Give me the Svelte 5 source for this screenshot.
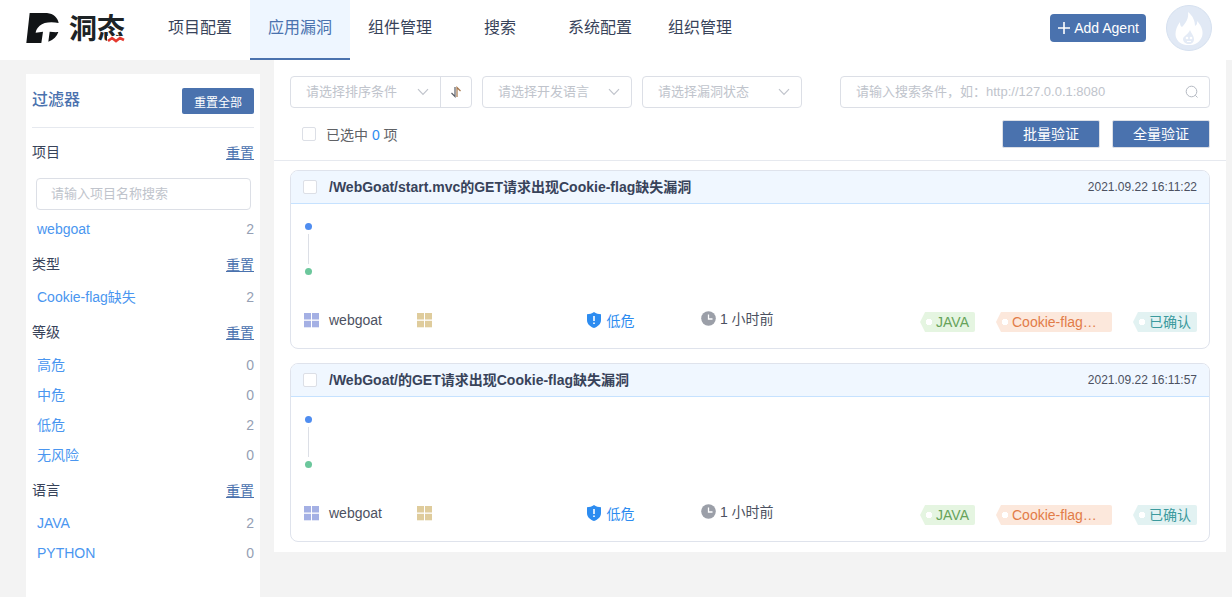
<script lang="ts">
	const nav = ['项目配置', '应用漏洞', '组件管理', '搜索', '系统配置', '组织管理'];
	let activeNav = $state('应用漏洞');

	const filters = [
		{ title: '项目', search: true, items: [{ name: 'webgoat', count: 2 }] },
		{ title: '类型', search: false, items: [{ name: 'Cookie-flag缺失', count: 2 }] },
		{
			title: '等级',
			search: false,
			items: [
				{ name: '高危', count: 0 },
				{ name: '中危', count: 0 },
				{ name: '低危', count: 2 },
				{ name: '无风险', count: 0 }
			]
		},
		{
			title: '语言',
			search: false,
			items: [
				{ name: 'JAVA', count: 2 },
				{ name: 'PYTHON', count: 0 }
			]
		}
	];

	let vulns = $state([
		{
			id: 1,
			title: '/WebGoat/start.mvc的GET请求出现Cookie-flag缺失漏洞',
			time: '2021.09.22 16:11:22',
			checked: false
		},
		{
			id: 2,
			title: '/WebGoat/的GET请求出现Cookie-flag缺失漏洞',
			time: '2021.09.22 16:11:57',
			checked: false
		}
	]);

	const selected = $derived(vulns.filter((v) => v.checked).length);

	function toggleAll(e: Event) {
		const on = (e.target as HTMLInputElement).checked;
		vulns.forEach((v) => (v.checked = on));
	}
</script>

{#snippet dropdown(label: string, cls: string)}
	<div class="select {cls}">
		<select aria-label={label}>
			<option>{label}</option>
		</select>
		<svg class="chevron" width="12" height="8" viewBox="0 0 12 8">
			<path d="M1 1.2 6 6.4 11 1.2" fill="none" stroke="#c0c4cc" stroke-width="1.2" />
		</svg>
	</div>
{/snippet}

{#snippet grid(color: string)}
	<svg width="15" height="15" viewBox="0 0 15 15" fill={color}>
		<rect width="7" height="6.5" />
		<rect x="8" width="7" height="6.5" />
		<rect y="7.8" width="7" height="6.5" />
		<rect x="8" y="7.8" width="7" height="6.5" />
	</svg>
{/snippet}

<header class="header">
	<a class="logo" href="#home">
		<svg width="33" height="30" viewBox="0 0 97 90" fill="#111416">
			<path d="M10 0H62C82 2 94 14 97 30C76 25 52 27 40 38C31 46 29 52 28 59L50 56L45 90H0Z" />
			<path d="M70 56C80 57 88 58 96 57C92 70 82 80 66 86Z" />
		</svg>
		<span class="logo-text">
			洞态
			<svg class="wave" width="18" height="7" viewBox="0 0 18 7">
				<path d="M1 5 5 2 9 5 13 2 17 4" fill="none" stroke="#e5392f" stroke-width="2.6" />
			</svg>
		</span>
	</a>
	<nav>
		{#each nav as item}
			<a
				href="#{item}"
				class:active={activeNav === item}
				onclick={() => (activeNav = item)}>{item}</a
			>
		{/each}
	</nav>
	<button class="add-agent">
		<svg width="14" height="14" viewBox="0 0 14 14">
			<path d="M7 1V13M1 7H13" stroke="#fff" stroke-width="1.6" />
		</svg>
		Add Agent
	</button>
	<svg class="avatar" width="46" height="46" viewBox="0 0 46 46">
		<circle cx="23" cy="23" r="22.5" fill="#e1e9f5" stroke="#d5e0ef" />
		<path
			d="M22 7C27 11 29 16 29 21C31 20 31.5 18 31 16C35 20 37 25 36.5 29C36 35 31 39 26 40H20C14 39 9.500 35 9.500 29C9.500 25 11 21 14 17C14 20 14.500 21 16 22C20 18 23 13 22 7Z"
			fill="#fff"
		/>
		<path
			d="M24 25C25 28 28 31 28 34C28 37 26 39 23 39C20 39 17 37 17 34C17 31 22 30 24 25Z"
			fill="#e4ebf6"
		/>
		<g fill="#fff">
			<circle cx="21" cy="33" r="1.3" />
			<circle cx="25" cy="33" r="1.3" />
			<rect x="21" y="36" width="4" height="1" />
		</g>
	</svg>
</header>

<div class="layout">
	<aside class="sidebar">
		<div class="sidebar-head">
			<h2>过滤器</h2>
			<button class="reset-all">重置全部</button>
		</div>
		{#each filters as group}
			<section>
				<div class="group-head">
					<h3>{group.title}</h3>
					<button class="reset">重置</button>
				</div>
				{#if group.search}
					<input
						class="project-search"
						type="text"
						placeholder="请输入项目名称搜索"
						aria-label="请输入项目名称搜索"
					/>
				{/if}
				<ul>
					{#each group.items as item}
						<li>
							<a href="#{item.name}">{item.name}</a>
							<span>{item.count}</span>
						</li>
					{/each}
				</ul>
			</section>
		{/each}
	</aside>

	<main class="content">
		<div class="toolbar">
			<div class="sort">
				{@render dropdown('请选择排序条件', 'joined')}
				<button class="sort-btn" aria-label="排序">
					<svg width="12" height="12" viewBox="0 0 12 12" fill="none" stroke-width="1.2">
						<path d="M5 1V10.5L1.5 7" stroke="#5b5f68" />
						<path d="M7 11V1.5L10.5 5" stroke="#a5764b" />
					</svg>
				</button>
			</div>
			{@render dropdown('请选择开发语言', '')}
			{@render dropdown('请选择漏洞状态', 'wide')}
			<div class="search">
				<input
					type="text"
					placeholder="请输入搜索条件，如：http://127.0.0.1:8080"
					aria-label="搜索条件"
				/>
				<svg width="14" height="14" viewBox="0 0 14 14" fill="none" stroke="#b4b9c2">
					<circle cx="6.5" cy="6.5" r="5.3" />
					<path d="M10.3 10.3 12.5 12.5" />
				</svg>
			</div>
		</div>

		<div class="batch">
			<label>
				<input type="checkbox" checked={selected === vulns.length} onchange={toggleAll} />
				<span>已选中 <b>{selected}</b> 项</span>
			</label>
			<div class="batch-actions">
				<button>批量验证</button>
				<button>全量验证</button>
			</div>
		</div>

		<div class="cards">
			{#each vulns as vuln (vuln.id)}
				<article class="card">
					<div class="card-head">
						<label>
							<input type="checkbox" bind:checked={vuln.checked} />
							<span>{vuln.title}</span>
						</label>
						<time>{vuln.time}</time>
					</div>
					<div class="trace">
						<i class="dot blue"></i>
						<i class="line"></i>
						<i class="dot green"></i>
					</div>
					<div class="card-foot">
						<div class="cell project">
							{@render grid('#a4b0e4')}
							<span>webgoat</span>
						</div>
						<div class="cell">
							{@render grid('#dfcc9c')}
						</div>
						<div class="cell level">
							<svg width="14" height="16" viewBox="0 0 14 16">
								<path
									d="M7 0C9 1.5 11.5 2.2 14 2.2V8C14 12 11 14.5 7 16C3 14.5 0 12 0 8V2.2C2.5 2.2 5 1.5 7 0Z"
									fill="#2d8cf0"
								/>
								<path d="M7 4V9M7 10.5V12" stroke="#fff" stroke-width="1.6" />
							</svg>
							<span>低危</span>
						</div>
						<div class="cell ago">
							<svg width="15" height="15" viewBox="0 0 15 15">
								<circle cx="7.5" cy="7.5" r="7.3" fill="#9b9fa8" />
								<path d="M7.5 3.5V8H11.5" fill="none" stroke="#fff" stroke-width="1.3" />
							</svg>
							<span>1 小时前</span>
						</div>
						<div class="tags">
							<span class="tag lang">JAVA</span>
							<span class="tag type">Cookie-flag…</span>
							<span class="tag status">已确认</span>
						</div>
					</div>
				</article>
			{/each}
		</div>
	</main>
</div>

<style>
	:global(body) {
		background: #f3f3f3;
		color: #38435a;
		font-family: 'Liberation Sans', 'Noto Sans CJK SC', sans-serif;
		font-size: 14px;
	}

	:global(*) {
		box-sizing: border-box;
	}

	button,
	input,
	select {
		font-family: inherit;
		font-size: 14px;
		margin: 0;
	}

	button {
		cursor: pointer;
		padding: 0;
		border: none;
	}

	a {
		text-decoration: none;
	}

	svg {
		display: block;
		flex-shrink: 0;
	}

	.header {
		display: flex;
		align-items: center;
		height: 60px;
		padding: 0 20px 0 26px;
		background: #fff;
	}

	.logo {
		display: flex;
		align-items: center;
		gap: 10px;
		width: 124px;
		height: 56px;
		align-self: flex-start;
		color: #1d2326;
	}

	.logo-text {
		position: relative;
		padding-top: 4px;
		font-size: 28px;
		font-weight: 700;
		line-height: 28px;
	}

	.wave {
		position: absolute;
		right: 0;
		bottom: 1px;
		background: #fff;
	}

	nav {
		display: flex;
		align-self: stretch;
		margin-right: auto;
	}

	nav a {
		width: 100px;
		height: 60px;
		line-height: 56px;
		font-size: 16px;
		text-align: center;
		color: #38435a;
		border-bottom: 2px solid transparent;
	}

	nav a.active {
		color: #4a72ae;
		background: #eef6ff;
		border-color: #4a72ae;
	}

	.add-agent {
		display: flex;
		align-items: center;
		justify-content: center;
		gap: 3px;
		width: 96px;
		height: 28px;
		margin: 0 20px 4px 0;
		color: #fff;
		background: #4a72ae;
		border-radius: 4px;
		white-space: nowrap;
	}

	.avatar {
		margin-bottom: 4px;
	}

	.layout {
		display: flex;
		align-items: flex-start;
		gap: 14px;
		padding: 0 6px 0 26px;
	}

	.sidebar {
		width: 234px;
		flex-shrink: 0;
		min-height: calc(100vh - 74px);
		margin-top: 14px;
		padding: 14px 6px;
		background: #fff;
	}

	.sidebar-head {
		display: flex;
		justify-content: space-between;
		padding-bottom: 13px;
		margin-bottom: 4px;
		border-bottom: 1px solid #e6e9ef;
	}

	h2 {
		margin: 0;
		font-size: 16px;
		font-weight: 500;
		line-height: 24px;
		color: #4a72ae;
	}

	.reset-all {
		width: 72px;
		height: 26px;
		font-size: 12px;
		color: #fff;
		background: #4a72ae;
		border-radius: 2px;
	}

	.group-head {
		display: flex;
		align-items: center;
		justify-content: space-between;
		height: 38px;
	}

	h3 {
		margin: 0;
		font-size: 14px;
		font-weight: 400;
	}

	.reset {
		padding-top: 2px;
		color: #4a72ae;
		background: none;
		text-decoration: underline;
	}

	.project-search {
		display: block;
		width: calc(100% - 7px);
		height: 32px;
		margin: 8px 3px 4px 4px;
		padding: 0 14px 2px;
		font-size: 13px;
		border: 1px solid #dcdfe6;
		border-radius: 4px;
	}

	input::placeholder {
		color: #c0c4cc;
	}

	ul {
		margin: 0;
		padding: 0 0 0 5px;
		list-style: none;
	}

	li {
		display: flex;
		justify-content: space-between;
		line-height: 30px;
		color: #959fb4;
	}

	li a {
		color: #4a96f0;
	}

	.content {
		flex: 1;
		min-width: 0;
		background: #fff;
	}

	.toolbar {
		display: flex;
		gap: 10px;
		padding: 16px 16px 0;
	}

	.select {
		display: grid;
		align-items: center;
		width: 150px;
		height: 32px;
		border: 1px solid #dcdfe6;
		border-radius: 4px;
	}

	.select.wide {
		width: 160px;
	}

	.select.joined {
		border: none;
	}

	select,
	.chevron {
		grid-area: 1 / 1;
	}

	select {
		width: 100%;
		height: 30px;
		padding: 0 30px 2px 15px;
		font-size: 13px;
		color: #c0c4cc;
		background: none;
		border: none;
		appearance: none;
	}

	.chevron {
		justify-self: end;
		margin-right: 11px;
		pointer-events: none;
	}

	.sort {
		display: flex;
		align-items: center;
		height: 32px;
		border: 1px solid #dcdfe6;
		border-radius: 4px;
	}

	.sort-btn {
		display: flex;
		align-items: center;
		justify-content: center;
		width: 31px;
		height: 30px;
		background: none;
		border-left: 1px solid #dcdfe6;
	}

	.sort .select {
		width: 149px;
	}

	.search {
		display: flex;
		align-items: center;
		flex: 1;
		height: 32px;
		margin-left: 28px;
		padding: 0 10px 0 15px;
		border: 1px solid #dcdfe6;
		border-radius: 4px;
	}

	.search input {
		flex: 1;
		min-width: 0;
		padding: 0 0 2px;
		font-size: 13px;
		border: none;
		outline: none;
	}

	label {
		display: flex;
		align-items: center;
		gap: 10px;
	}

	input[type='checkbox'] {
		width: 14px;
		height: 14px;
		flex-shrink: 0;
		background: #fff;
		border: 1px solid #dcdfe6;
		border-radius: 2px;
		appearance: none;
	}

	input[type='checkbox']:checked {
		background: #4a72ae;
		border-color: #4a72ae;
	}

	.batch {
		display: flex;
		align-items: center;
		justify-content: space-between;
		padding: 12px 16px 12px 28px;
		color: #606266;
		border-bottom: 1px solid #e6e9ef;
	}

	.batch b {
		font-weight: 400;
		color: #2d8cf0;
	}

	.batch-actions {
		display: flex;
		gap: 12px;
	}

	.batch-actions button {
		width: 98px;
		height: 28px;
		padding-bottom: 2px;
		color: #fff;
		background: #4a72ae;
		border: 1px solid #dcdfe6;
		border-radius: 2px;
	}

	.cards {
		display: flex;
		flex-direction: column;
		gap: 14px;
		padding: 9px 16px 10px;
	}

	.card {
		border: 1px solid #dfe3ec;
		border-radius: 8px;
		overflow: hidden;
	}

	.card-head {
		display: flex;
		align-items: center;
		justify-content: space-between;
		height: 33px;
		padding: 0 12px;
		background: #f0f7ff;
		border-bottom: 1px solid #c6e2ff;
	}

	.card-head label {
		gap: 12px;
		font-weight: 700;
	}

	.card-head span {
		padding-bottom: 2px;
	}

	time {
		font-size: 12px;
		color: #4c5161;
	}

	.trace {
		display: flex;
		flex-direction: column;
		align-items: center;
		gap: 4px;
		width: 7px;
		margin: 19px 0 0 14px;
	}

	.dot {
		width: 7px;
		height: 7px;
		border-radius: 50%;
	}

	.blue {
		background: #4f8df0;
	}

	.green {
		background: #6cc79c;
	}

	.line {
		width: 1px;
		height: 30px;
		background: #dcdfe6;
	}

	.card-foot {
		display: grid;
		grid-template-columns: 8fr 12fr 8fr 8fr 27fr;
		align-items: center;
		padding: 33px 12px 16px 13px;
		color: #4c5161;
	}

	.cell {
		display: flex;
		align-items: center;
		gap: 5px;
		height: 20px;
		white-space: nowrap;
	}

	.project {
		gap: 10px;
	}

	.level {
		color: #2d8cf0;
	}

	.ago {
		gap: 4px;
		margin-bottom: 4px;
	}

	.tags {
		display: flex;
		justify-content: flex-end;
		gap: 21px;
		padding-top: 4px;
	}

	.tag {
		height: 20px;
		padding: 0 6px 0 16px;
		line-height: 20px;
		border-radius: 2px;
		background-image: radial-gradient(circle at 9px 10px, #fff 3px, transparent 3px);
		clip-path: polygon(5px 0, 100% 0, 100% 100%, 5px 100%, 0 50%);
		white-space: nowrap;
	}

	.lang {
		color: #67a35a;
		background-color: #e5f5e1;
	}

	.type {
		width: 116px;
		color: #e27c48;
		background-color: #fce8dc;
	}

	.status {
		color: #3c9a9e;
		background-color: #e2f2f2;
	}
</style>
